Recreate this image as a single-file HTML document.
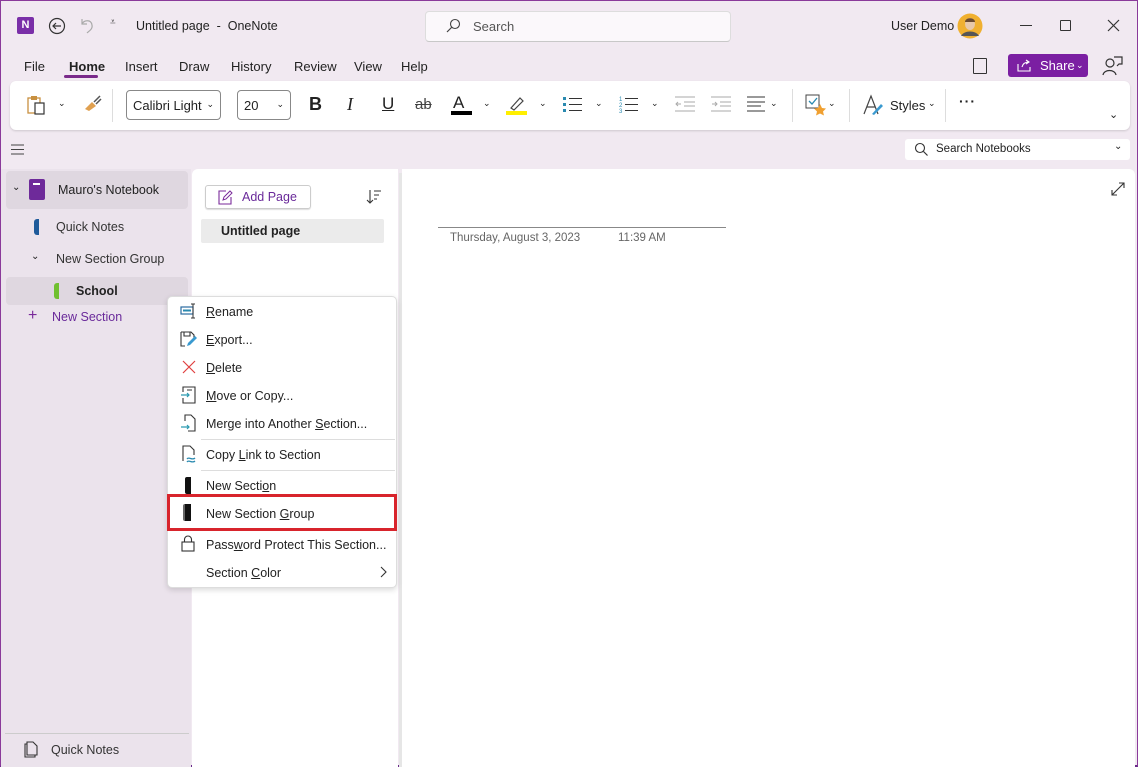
<!DOCTYPE html><html><head><meta charset="utf-8"><style>
*{margin:0;padding:0;box-sizing:border-box}
body{width:1138px;height:767px;overflow:hidden;background:#f1e9f1;font-family:"Liberation Sans",sans-serif;font-size:13px;color:#222;position:relative;border:1px solid #8a3a9a;border-bottom:2px solid #6a2a8a}
.a{position:absolute;white-space:nowrap}
.ic{position:absolute}
.mi{position:absolute;left:205px;font-size:12.5px;color:#222}
u{text-decoration:underline}
</style></head><body>
<!-- title bar -->
<div class="a" style="left:16px;top:16px;width:17px;height:17px;background:#7a2fa8;border-radius:2px;color:#fff;font-weight:bold;font-size:11px;text-align:center;line-height:17px">N</div>
<svg class="ic" style="left:47px;top:16px" width="18" height="18"><circle cx="9" cy="9" r="7.5" fill="none" stroke="#333" stroke-width="1.2"/><path d="M13 9H5M8 6L5 9l3 3" fill="none" stroke="#333" stroke-width="1.2"/></svg>
<svg class="ic" style="left:77px;top:15px" width="18" height="18"><path d="M4 3v5h5M4 8c2-4 9-5 10 1 1 4-3 6-5 8" fill="none" stroke="#aaa" stroke-width="1.2"/></svg>
<div class="a" style="left:109px;top:16px;font-size:10px;color:#444">⩡</div>
<div class="a" style="left:135px;top:18px;font-size:12.5px">Untitled page&nbsp; - &nbsp;OneNote</div>
<div class="a" style="left:424px;top:10px;width:306px;height:31px;background:#fbf8fb;border:1px solid #ddd;border-bottom-color:#c8c8c8;border-radius:4px"></div>
<svg class="ic" style="left:444px;top:17px" width="16" height="16"><circle cx="10" cy="6" r="4.5" fill="none" stroke="#444" stroke-width="1.1"/><path d="M7 9l-5 5" stroke="#444" stroke-width="1.2"/></svg>
<div class="a" style="left:472px;top:18px;font-size:13px;color:#555">Search</div>
<div class="a" style="left:890px;top:18px;font-size:12.5px">User Demo</div>
<svg class="ic" style="left:956px;top:12px" width="26" height="26"><circle cx="13" cy="13" r="12.5" fill="#f0b030"/><ellipse cx="13" cy="11" rx="5" ry="6" fill="#e8c8a8"/><path d="M8 9c0-5 10-5 10 0" fill="#6a4a30"/><path d="M4 23c3-6 15-6 18 0z" fill="#555"/></svg>
<div class="a" style="left:1019px;top:24px;width:12px;height:1px;background:#333"></div>
<div class="a" style="left:1059px;top:19px;width:11px;height:11px;border:1.2px solid #333;border-radius:1px"></div>
<svg class="ic" style="left:1106px;top:18px" width="13" height="13"><path d="M1 1l11 11M12 1L1 12" stroke="#333" stroke-width="1.2"/></svg>
<!-- tabs -->
<div class="a" style="left:23px;top:58px;font-size:13px">File</div>
<div class="a" style="left:68px;top:58px;font-size:13px;font-weight:bold;color:#222">Home</div>
<div class="a" style="left:63px;top:74px;width:34px;height:3px;background:#7a2a8a;border-radius:2px"></div>
<div class="a" style="left:124px;top:58px;font-size:13px">Insert</div>
<div class="a" style="left:178px;top:58px;font-size:13px">Draw</div>
<div class="a" style="left:230px;top:58px;font-size:13px">History</div>
<div class="a" style="left:293px;top:58px;font-size:13px">Review</div>
<div class="a" style="left:353px;top:58px;font-size:13px">View</div>
<div class="a" style="left:400px;top:58px;font-size:13px">Help</div>
<div class="a" style="left:972px;top:57px;width:14px;height:16px;border:1.3px solid #333;border-radius:1px"></div>
<div class="a" style="left:1007px;top:53px;width:80px;height:23px;background:#7b1fa2;border-radius:3px;color:#fff;font-size:13px;line-height:23px;padding-left:32px">Share<span style="position:absolute;left:68px;font-size:9px">⌄</span></div>
<svg class="ic" style="left:1016px;top:58px" width="14" height="13"><path d="M1 5v7h12V8M5 8c1-4 4-5 7-5M9 1l3 2-3 2" fill="none" stroke="#fff" stroke-width="1.1"/></svg>
<svg class="ic" style="left:1101px;top:54px" width="22" height="22"><circle cx="8" cy="8" r="4" fill="none" stroke="#333" stroke-width="1.2"/><path d="M1 20c1-6 12-6 13 0M12 2h8v7h-3l-2 2" fill="none" stroke="#333" stroke-width="1.2"/></svg>
<!-- ribbon -->
<div class="a" style="left:9px;top:80px;width:1120px;height:49px;background:#fff;border-radius:6px;box-shadow:0 1px 2px rgba(0,0,0,.15)"></div>
<svg class="ic" style="left:26px;top:94px" width="20" height="20"><rect x="1" y="3" width="12" height="15" fill="none" stroke="#c89040" stroke-width="1.3"/><rect x="4" y="1" width="6" height="4" fill="#c89040"/><rect x="8" y="8" width="9" height="11" fill="#fff" stroke="#333" stroke-width="1.2"/></svg>
<div class="a" style="left:57px;top:97px;font-size:9px">⌄</div>
<svg class="ic" style="left:82px;top:94px" width="20" height="18"><path d="M2 14l7-7 4 4-7 5z" fill="#e0a050"/><path d="M11 7l6-6M13 9l5-5" stroke="#555" stroke-width="1.5"/></svg>
<div class="a" style="left:111px;top:88px;width:1px;height:33px;background:#ddd"></div>
<div class="a" style="left:125px;top:89px;width:95px;height:30px;border:1px solid #888;border-radius:4px;padding:7px 0 0 6px;font-size:13px">Calibri Light<span style="position:absolute;right:6px;font-size:9px;top:8px">⌄</span></div>
<div class="a" style="left:236px;top:89px;width:54px;height:30px;border:1px solid #888;border-radius:4px;padding:7px 0 0 6px;font-size:13px">20<span style="position:absolute;right:6px;font-size:9px;top:8px">⌄</span></div>
<div class="a" style="left:308px;top:93px;font-size:18px;font-weight:bold">B</div>
<div class="a" style="left:346px;top:93px;font-size:18px;font-style:italic;font-family:'Liberation Serif'">I</div>
<div class="a" style="left:381px;top:93px;font-size:17px;text-decoration:underline">U</div>
<div class="a" style="left:414px;top:95px;font-size:15px;text-decoration:line-through;color:#444">ab</div>
<div class="a" style="left:452px;top:92px;font-size:17px">A</div>
<div class="a" style="left:450px;top:110px;width:21px;height:4px;background:#000"></div>
<div class="a" style="left:482px;top:97px;font-size:9px">⌄</div>
<svg class="ic" style="left:506px;top:94px" width="20" height="16"><path d="M4 13l9-10 3 3-9 9z" fill="none" stroke="#444" stroke-width="1.2"/></svg>
<div class="a" style="left:505px;top:110px;width:21px;height:4px;background:#ffef00"></div>
<div class="a" style="left:538px;top:97px;font-size:9px">⌄</div>
<svg class="ic" style="left:562px;top:95px" width="20" height="16"><g fill="#2a8ab0"><rect x="0" y="1" width="3" height="3"/><rect x="0" y="7" width="3" height="3"/><rect x="0" y="13" width="3" height="3"/></g><path d="M6 2.5h13M6 8.5h13M6 14.5h13" stroke="#333"/></svg>
<div class="a" style="left:594px;top:97px;font-size:9px">⌄</div>
<svg class="ic" style="left:618px;top:94px" width="20" height="18"><text x="0" y="6" font-size="6" fill="#2a8ab0">1</text><text x="0" y="12" font-size="6" fill="#2a8ab0">2</text><text x="0" y="18" font-size="6" fill="#2a8ab0">3</text><path d="M6 3.5h13M6 9.5h13M6 15.5h13" stroke="#333"/></svg>
<div class="a" style="left:650px;top:97px;font-size:9px">⌄</div>
<svg class="ic" style="left:674px;top:95px" width="20" height="16"><path d="M0 1h20M9 6h11M9 10h11M0 15h20M6 8H1M3 6L1 8l2 2" stroke="#aaa" fill="none"/></svg>
<svg class="ic" style="left:710px;top:95px" width="20" height="16"><path d="M0 1h20M9 6h11M9 10h11M0 15h20M1 8h5M4 6l2 2-2 2" stroke="#aaa" fill="none"/></svg>
<svg class="ic" style="left:746px;top:95px" width="20" height="16"><path d="M0 1h18M0 6h18M0 10h14M0 15h18" stroke="#333"/></svg>
<div class="a" style="left:769px;top:97px;font-size:9px">⌄</div>
<div class="a" style="left:791px;top:88px;width:1px;height:33px;background:#ddd"></div>
<svg class="ic" style="left:804px;top:93px" width="22" height="22"><rect x="1" y="1" width="13" height="13" fill="none" stroke="#444"/><path d="M4 7l3 3 5-6" stroke="#2a8ab0" fill="none" stroke-width="1.3"/><path d="M15 10l2 4 4 .5-3 3 1 4-4-2-4 2 1-4-3-3 4-.5z" fill="#f0a030"/></svg>
<div class="a" style="left:827px;top:97px;font-size:9px">⌄</div>
<div class="a" style="left:848px;top:88px;width:1px;height:33px;background:#ddd"></div>
<svg class="ic" style="left:862px;top:93px" width="22" height="22"><path d="M1 20L8 2l7 18M4 13h8" stroke="#444" fill="none" stroke-width="1.2"/><path d="M9 20l9-10 2 2-9 9z" fill="#3a9ad0"/></svg>
<div class="a" style="left:889px;top:97px;font-size:13px">Styles</div>
<div class="a" style="left:927px;top:97px;font-size:9px">⌄</div>
<div class="a" style="left:944px;top:88px;width:1px;height:33px;background:#ddd"></div>
<div class="a" style="left:958px;top:92px;font-size:14px;letter-spacing:1px;font-weight:bold">···</div>
<div class="a" style="left:1108px;top:107px;font-size:11px">⌄</div>
<!-- nav bar -->
<svg class="ic" style="left:10px;top:143px" width="13" height="11"><path d="M0 1h13M0 5.5h13M0 10h13" stroke="#444"/></svg>
<div class="a" style="left:904px;top:138px;width:225px;height:21px;background:#fff;border-radius:3px"></div>
<svg class="ic" style="left:913px;top:141px" width="14" height="14"><circle cx="6" cy="6" r="4.5" fill="none" stroke="#333" stroke-width="1.1"/><path d="M9.5 9.5l4 4" stroke="#333" stroke-width="1.2"/></svg>
<div class="a" style="left:935px;top:142px;font-size:11.5px">Search Notebooks</div>
<div class="a" style="left:1113px;top:140px;font-size:10px">⌄</div>
<!-- sidebar -->
<div class="a" style="left:0;top:168px;width:190px;height:598px;background:#ebe3ec"></div>
<div class="a" style="left:5px;top:170px;width:182px;height:38px;background:#dfd7e0;border-radius:4px"></div>
<div class="a" style="left:11px;top:181px;font-size:10px">⌄</div>
<div class="a" style="left:28px;top:178px;width:16px;height:21px;background:#6e2a9a;border-radius:2px"></div>
<div class="a" style="left:32px;top:182px;width:7px;height:2px;background:#fff"></div>
<div class="a" style="left:57px;top:182px;font-size:12.5px">Mauro's Notebook</div>
<div class="a" style="left:33px;top:218px;width:5px;height:16px;background:#1e5a9a;border-radius:3px 0 0 3px"></div>
<div class="a" style="left:55px;top:219px;font-size:12.5px;color:#333">Quick Notes</div>
<div class="a" style="left:30px;top:250px;font-size:10px">⌄</div>
<div class="a" style="left:55px;top:251px;font-size:12.5px;color:#333">New Section Group</div>
<div class="a" style="left:5px;top:276px;width:182px;height:28px;background:#dfd7e0;border-radius:4px"></div>
<div class="a" style="left:53px;top:282px;width:5px;height:16px;background:#70c030;border-radius:3px 0 0 3px"></div>
<div class="a" style="left:75px;top:283px;font-size:12.5px;font-weight:bold">School</div>
<div class="a" style="left:27px;top:306px;font-size:16px;color:#7a2a9a">+</div>
<div class="a" style="left:51px;top:309px;font-size:12.5px;color:#6a2a9a">New Section</div>
<div class="a" style="left:4px;top:732px;width:184px;height:1px;background:#ccc"></div>
<svg class="ic" style="left:23px;top:740px" width="14" height="17"><path d="M3 3H1v13h10v-2M3 1h6l4 4v9H3z" fill="none" stroke="#333" stroke-width="1.1"/></svg>
<div class="a" style="left:50px;top:742px;font-size:12.5px;color:#333">Quick Notes</div>
<!-- page list -->
<div class="a" style="left:191px;top:168px;width:206px;height:598px;background:#fff;border-radius:6px 0 0 0"></div>
<div class="a" style="left:398px;top:172px;width:3px;height:594px;background:#e6e6e6"></div>
<div class="a" style="left:204px;top:184px;width:106px;height:24px;border:1px solid #ccc;border-radius:3px;box-shadow:0 1px 1px #ddd"></div>
<svg class="ic" style="left:217px;top:189px" width="15" height="15"><path d="M13 7v7H1V1h7" fill="none" stroke="#7a2a9a" stroke-width="1.1"/><path d="M5 10l1-3 6-6 2 2-6 6z" fill="none" stroke="#7a2a9a"/></svg>
<div class="a" style="left:241px;top:189px;font-size:12.5px;color:#6a2a9a">Add Page</div>
<svg class="ic" style="left:365px;top:188px" width="16" height="16"><path d="M4 1v13M1 11l3 3 3-3M8 2h7M8 6h5M8 10h3" stroke="#333" fill="none" stroke-width="1.1"/></svg>
<div class="a" style="left:200px;top:218px;width:183px;height:24px;background:#ebebeb;border-radius:2px"></div>
<div class="a" style="left:220px;top:223px;font-size:12.5px;font-weight:bold">Untitled page</div>
<!-- content -->
<div class="a" style="left:401px;top:168px;width:733px;height:598px;background:#fff;border-radius:0 6px 0 0"></div>
<svg class="ic" style="left:1110px;top:181px" width="14" height="14"><path d="M1 13l12-12M8 1h5v5M1 8v5h5" fill="none" stroke="#333" stroke-width="1.1"/></svg>
<div class="a" style="left:437px;top:226px;width:288px;height:1px;background:#888"></div>
<div class="a" style="left:449px;top:231px;font-size:11.5px;color:#666">Thursday, August 3, 2023</div>
<div class="a" style="left:617px;top:231px;font-size:11.5px;color:#666">11:39 AM</div>
<!-- context menu -->
<div class="a" style="left:166px;top:295px;width:230px;height:292px;background:#fff;border:1px solid #ddd;border-radius:5px;box-shadow:0 2px 6px rgba(0,0,0,.15)"></div>
<svg class="ic" style="left:179px;top:302px" width="18" height="16"><rect x="1" y="4" width="12" height="7" fill="none" stroke="#2a6aa0" stroke-width="1.2"/><path d="M3 7.5h8" stroke="#2a8ab0" stroke-width="2"/><path d="M13 1v14M11 1h4M11 15h4" stroke="#333"/></svg>
<div class="mi" style="top:304px"><u>R</u>ename</div>
<svg class="ic" style="left:179px;top:330px" width="18" height="17"><path d="M1 1h10l3 3v3M1 1v14h4M4 1v4h6V1" fill="none" stroke="#333" stroke-width="1.1"/><path d="M7 15l1-3 7-7 2 2-7 7z" fill="#3a9ad0"/></svg>
<div class="mi" style="top:332px"><u>E</u>xport...</div>
<svg class="ic" style="left:181px;top:359px" width="14" height="14"><path d="M1 1l12 12M13 1L1 13" stroke="#e04040" stroke-width="1.2"/></svg>
<div class="mi" style="top:360px"><u>D</u>elete</div>
<svg class="ic" style="left:179px;top:385px" width="18" height="18"><path d="M3 6V1h12v16H3v-5" fill="none" stroke="#333" stroke-width="1.1"/><path d="M1 9h8M7 7l2 2-2 2" stroke="#2a9ab0" fill="none" stroke-width="1.2"/><path d="M7 4h5" stroke="#333"/></svg>
<div class="mi" style="top:388px"><u>M</u>ove or Copy...</div>
<svg class="ic" style="left:179px;top:413px" width="18" height="18"><path d="M5 7V1h6l4 4v12H8" fill="none" stroke="#333" stroke-width="1.1"/><path d="M1 13h8M7 11l2 2-2 2" stroke="#2a9ab0" fill="none" stroke-width="1.2"/></svg>
<div class="mi" style="top:416px">Merge into Another <u>S</u>ection...</div>
<div class="a" style="left:200px;top:438px;width:194px;height:1px;background:#ddd"></div>
<svg class="ic" style="left:180px;top:444px" width="18" height="19"><path d="M2 16V1h7l4 4v5" fill="none" stroke="#333" stroke-width="1.1"/><path d="M6 14c2-3 5 2 8-1M6 17c2-3 5 2 8-1" stroke="#2a8ab0" fill="none" stroke-width="1.3"/></svg>
<div class="mi" style="top:447px">Copy <u>L</u>ink to Section</div>
<div class="a" style="left:200px;top:469px;width:194px;height:1px;background:#ddd"></div>
<div class="a" style="left:184px;top:476px;width:6px;height:17px;background:#111;border-radius:2px 0 0 2px"></div>
<div class="mi" style="top:478px">New Secti<u>o</u>n</div>
<div class="a" style="left:182px;top:503px;width:8px;height:17px;background:#111;border-radius:2px 0 0 2px;border-left:2px solid #666"></div>
<div class="mi" style="top:506px">New Section <u>G</u>roup</div>
<div class="a" style="left:166px;top:493px;width:230px;height:37px;border:3px solid #d8242c"></div>
<svg class="ic" style="left:180px;top:534px" width="14" height="17"><rect x="1" y="7" width="12" height="9" fill="none" stroke="#333" stroke-width="1.1"/><path d="M3.5 7V4.5a3.5 3.5 0 0 1 7 0V7" fill="none" stroke="#333" stroke-width="1.1"/></svg>
<div class="mi" style="top:537px">Pass<u>w</u>ord Protect This Section...</div>
<div class="mi" style="top:565px">Section <u>C</u>olor</div>
<svg class="ic" style="left:379px;top:565px" width="8" height="12"><path d="M1 1l5 5-5 5" fill="none" stroke="#333" stroke-width="1.1"/></svg>
</body></html>
